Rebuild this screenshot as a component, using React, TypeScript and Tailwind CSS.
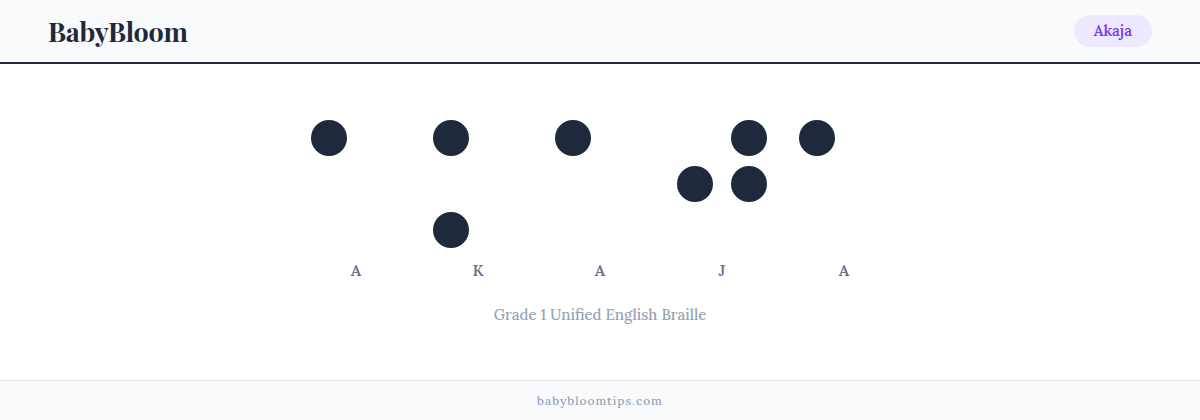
const cells: { label: string; dots: number[] }[] = [
  { label: 'A', dots: [1] },
  { label: 'K', dots: [1, 3] },
  { label: 'A', dots: [1] },
  { label: 'J', dots: [2, 4, 5] },
  { label: 'A', dots: [1] },
];

// braille dot order in a 2x3 grid, row by row
const order = [1, 4, 2, 5, 3, 6];

const Cell = ({ label, dots }: { label: string; dots: number[] }) => (
  <div className="flex flex-col items-center">
    <div className="grid grid-cols-[36px_36px] gap-x-[18px] gap-y-[10px]">
      {order.map((n) => (
        <div
          key={n}
          className={
            dots.includes(n)
              ? 'w-9 h-9 rounded-full bg-[#1e293b]'
              : 'w-9 h-9 rounded-full'
          }
        />
      ))}
    </div>
    <div className="mt-[12px] text-[16px] font-semibold text-[#64748b] leading-5">
      {label}
    </div>
  </div>
);

export default function App() {
  return (
    <div className="w-[1200px] h-[420px] flex flex-col bg-white font-['Lora','DejaVu_Serif',serif]">
      <header className="h-[64px] flex items-center justify-between px-12 bg-[#f8fafc] border-b-2 border-[#1e293b]">
        <div className="text-[27px] font-bold text-[#1e293b] tracking-[-0.01em] font-['Playfair_Display','DejaVu_Serif',serif]">
          BabyBloom
        </div>
        <div className="h-[32px] px-5 flex items-center rounded-full bg-[#ede9fe] text-[#7c3aed] text-[15px] font-semibold">
          Akaja
        </div>
      </header>
      <main className="flex-1 flex flex-col items-center pt-[56px]">
        <div className="flex gap-x-[32px]">
          {cells.map((c, i) => (
            <Cell key={i} label={c.label} dots={c.dots} />
          ))}
        </div>
        <p className="mt-[24px] text-[15px] font-medium text-[#94a3b8]">
          Grade 1 Unified English Braille
        </p>
      </main>
      <footer className="h-[40px] flex items-center justify-center bg-[#f8fafc] border-t border-[#e2e8f0] text-[12px] font-medium tracking-[0.08em] text-[#94a3b8]">
        babybloomtips.com
      </footer>
    </div>
  );
}
